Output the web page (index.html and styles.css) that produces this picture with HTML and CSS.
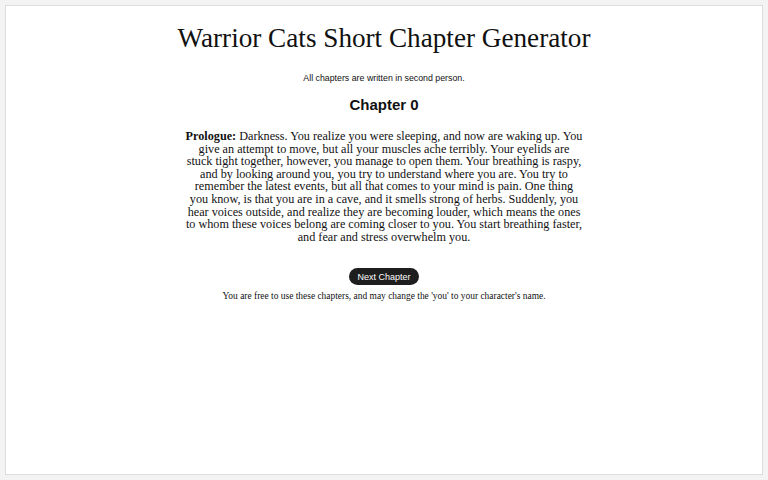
FILE: index.html
```html
<!DOCTYPE html>
<html lang="en">
<head>
<meta charset="utf-8">
<title>Warrior Cats Short Chapter Generator</title>
<link rel="stylesheet" href="styles.css">
</head>
<body>
<main class="page">
  <h1 class="title">Warrior Cats Short Chapter Generator</h1>
  <p class="note">All chapters are written in second person.</p>
  <h2 class="chapter-heading">Chapter 0</h2>
  <p class="chapter-text"><b>Prologue:</b> Darkness. You realize you were sleeping, and now are waking up. You give an attempt to move, but all your muscles ache terribly. Your eyelids are stuck tight together, however, you manage to open them. Your breathing is raspy, and by looking around you, you try to understand where you are. You try to remember the latest events, but all that comes to your mind is pain. One thing you know, is that you are in a cave, and it smells strong of herbs. Suddenly, you hear voices outside, and realize they are becoming louder, which means the ones to whom these voices belong are coming closer to you. You start breathing faster, and fear and stress overwhelm you.</p>
  <button class="next-btn" type="button">Next Chapter</button>
  <p class="footer-note">You are free to use these chapters, and may change the 'you' to your character's name.</p>
</main>
</body>
</html>
```
FILE: styles.css
```css
html, body {
  margin: 0;
  padding: 0;
}

body {
  background: #f3f3f3;
  padding: 5px;
  height: 480px;
  box-sizing: border-box;
  font-family: "Liberation Serif", serif;
  color: #111;
}

.page {
  background: #fff;
  border: 1px solid #dcdcdc;
  height: 100%;
  box-sizing: border-box;
  display: flex;
  flex-direction: column;
  align-items: center;
  text-align: center;
  padding-top: 17px;
}

.title {
  font-weight: normal;
  font-size: 27.2px;
  line-height: 30px;
  margin: 0;
}

.note {
  font-family: "Liberation Sans", sans-serif;
  font-size: 8.8px;
  margin: 20px 0 0;
}

.chapter-heading {
  font-family: "Liberation Sans", sans-serif;
  font-size: 15px;
  font-weight: bold;
  margin: 13px 0 0;
}

.chapter-text {
  font-size: 12.2px;
  line-height: 12.6px;
  width: 399px;
  margin: 17px 0 0;
}

.next-btn {
  margin-top: 25px;
  background: #1e1e1e;
  color: #fff;
  border: none;
  border-radius: 9px;
  font-family: "Liberation Sans", sans-serif;
  font-size: 9px;
  height: 17px;
  padding: 0 8.5px;
}

.footer-note {
  font-size: 9.45px;
  margin: 6px 0 0;
}
```
